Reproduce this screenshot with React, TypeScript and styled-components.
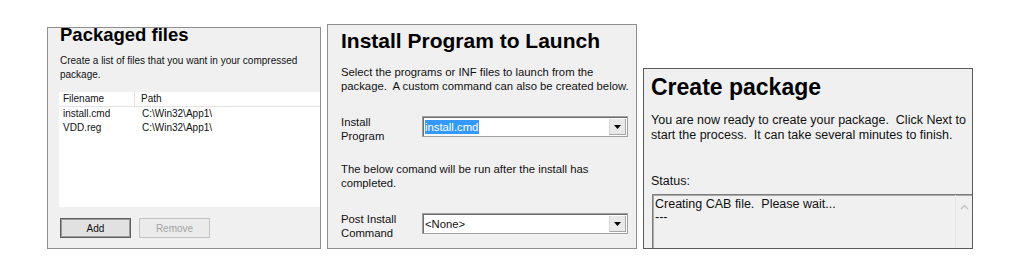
import React from "react";
import styled, { createGlobalStyle } from "styled-components";

const Global = createGlobalStyle`
  html, body { margin: 0; padding: 0; background: #ffffff; }
  body { font-family: "Liberation Sans", Arial, sans-serif; color: #000; }
  #root { width: 1024px; height: 266px; overflow: hidden; }
`;

const Stage = styled.main`
  display: flex;
  align-items: flex-end;
  gap: 6px;
  height: 266px;
  box-sizing: border-box;
  padding: 0 0 17px 47px;
  background: #ffffff;
`;

const Panel = styled.section<{ $width: number; $height: number; $pad: number; $dark?: boolean }>`
  flex: 0 0 auto;
  width: ${(p) => p.$width}px;
  height: ${(p) => p.$height}px;
  box-sizing: border-box;
  border: 1px solid ${(p) => (p.$dark ? "#5a5a5a" : "#8f8f8f")};
  background: #f0f0f0;
  overflow: hidden;
  padding-left: ${(p) => p.$pad}px;
  display: flex;
  flex-direction: column;
  align-items: flex-start;
`;

const Heading = styled.h1<{ $size: number; $lh: number; $top: number }>`
  margin: ${(p) => p.$top}px 0 0;
  font-size: ${(p) => p.$size}px;
  line-height: ${(p) => p.$lh}px;
  font-weight: 700;
  white-space: nowrap;
  color: #000;
`;

const Text = styled.p<{ $size: number; $lh: number; $top: number }>`
  margin: ${(p) => p.$top}px 0 0;
  font-size: ${(p) => p.$size}px;
  line-height: ${(p) => p.$lh}px;
  white-space: nowrap;
  color: #111;
`;

/* ---------- list view (panel 1) ---------- */
const ListView = styled.div`
  flex: 0 0 auto;
  margin: 10px 0 0 -1px;
  width: 280px;
  height: 115px;
  background: #ffffff;
  font-size: 10px;
  color: #111;
`;

const ListHeader = styled.div`
  display: grid;
  grid-template-columns: 76px 1fr;
  height: 14px;
  border-bottom: 1px solid #e3e3e3;
`;

const HeaderCell = styled.div<{ $first?: boolean; $pl: number }>`
  line-height: 14px;
  padding-left: ${(p) => p.$pl}px;
  border-right: ${(p) => (p.$first ? "1px solid #e3e3e3" : "none")};
  white-space: nowrap;
`;

const ListRow = styled.div`
  display: grid;
  grid-template-columns: 76px 1fr;
  height: 14px;
  line-height: 14px;
  white-space: nowrap;
`;

const Cell = styled.div<{ $pl: number }>`
  padding-left: ${(p) => p.$pl}px;
`;

const ButtonRow = styled.div`
  display: flex;
  gap: 8px;
  margin-top: 11px;
`;

const Button = styled.button<{ $default?: boolean }>`
  width: 71px;
  height: 20px;
  box-sizing: border-box;
  padding: 0;
  font-family: "Liberation Sans", Arial, sans-serif;
  font-size: 10px;
  color: ${(p) => (p.$default ? "#111" : "#a3a3a3")};
  background: ${(p) => (p.$default ? "#e1e1e1" : "#ebebeb")};
  border: 1px solid ${(p) => (p.$default ? "#5f5f5f" : "#c4c4c4")};
  box-shadow: ${(p) => (p.$default ? "inset 0 0 0 1px #9a9a9a" : "none")};
`;

/* ---------- combo boxes (panel 2) ---------- */
const FieldRow = styled.div<{ $top: number }>`
  display: flex;
  align-items: flex-start;
  margin-top: ${(p) => p.$top}px;
`;

const FieldLabel = styled.label`
  width: 81px;
  font-size: 11.3px;
  line-height: 14px;
  color: #111;
  white-space: nowrap;
`;

const Combo = styled.div<{ $h: number }>`
  margin-top: 1px;
  width: 206px;
  height: ${(p) => p.$h}px;
  box-sizing: border-box;
  display: flex;
  align-items: center;
  background: #ffffff;
  border: 1px solid #a0a0a0;
  box-shadow: inset 1px 1px 0 #6d6d6d;
  padding: 0 1px 0 2px;
  font-size: 11.3px;
  color: #111;
`;

const ComboValue = styled.span<{ $selected?: boolean }>`
  flex: 1;
  display: flex;
  white-space: nowrap;
  span {
    line-height: 14px;
    padding: 0 1px 0 0;
    background: ${(p) => (p.$selected ? "#3399ff" : "transparent")};
    color: ${(p) => (p.$selected ? "#ffffff" : "#111")};
  }
`;

const DropButton = styled.div`
  width: 17px;
  height: calc(100% - 3px);
  margin-top: 1px;
  box-sizing: border-box;
  display: flex;
  align-items: center;
  justify-content: center;
  background: #e9e9e9;
  border-left: 1px solid #d6d6d6;
  border-bottom: 1px solid #a8a8a8;
  border-right: 1px solid #a8a8a8;
`;

/* ---------- status box (panel 3) ---------- */
const StatusBox = styled.div`
  flex: 0 0 auto;
  margin: 5px 0 0 1px;
  width: 321px;
  height: 70px;
  box-sizing: border-box;
  display: flex;
  border: 1px solid #7d7d7d;
  box-shadow: inset 1px 1px 0 #a9a9a9;
  background: #f0f0f0;
`;

const StatusText = styled.div`
  width: 302px;
  padding: 3px 0 0 2px;
  box-sizing: border-box;
  font-size: 12.5px;
  line-height: 13px;
  color: #111;
  white-space: nowrap;
`;

const ScrollBar = styled.div`
  width: 17px;
  border-left: 1px solid #e6e6e6;
  display: flex;
  justify-content: center;
  padding-top: 9px;
  box-sizing: border-box;
`;

const DownArrow = () => (
  <svg width="7" height="4" viewBox="0 0 7 4">
    <path d="M0 0h7L3.5 4z" fill="#000" />
  </svg>
);

const UpChevron = () => (
  <svg width="9" height="6" viewBox="0 0 9 6">
    <polyline points="1,5 4.5,1.5 8,5" fill="none" stroke="#c4c4c4" strokeWidth="1.4" />
  </svg>
);

export default function App() {
  return (
    <>
      <Global />
      <Stage>
        <Panel $width={274} $height={222} $pad={12}>
          <Heading $size={18.5} $lh={14} $top={0}>Packaged files</Heading>
          <Text $size={10} $lh={14} $top={12}>
            Create a list of files that you want in your compressed
            <br />
            package.
          </Text>
          <ListView>
            <ListHeader>
              <HeaderCell $first $pl={4}>Filename</HeaderCell>
              <HeaderCell $pl={6}>Path</HeaderCell>
            </ListHeader>
            <ListRow>
              <Cell $pl={4}>install.cmd</Cell>
              <Cell $pl={7}>C:\Win32\App1\</Cell>
            </ListRow>
            <ListRow>
              <Cell $pl={4}>VDD.reg</Cell>
              <Cell $pl={7}>C:\Win32\App1\</Cell>
            </ListRow>
          </ListView>
          <ButtonRow>
            <Button $default>Add</Button>
            <Button disabled>Remove</Button>
          </ButtonRow>
        </Panel>

        <Panel $width={310} $height={225} $pad={13}>
          <Heading $size={21} $lh={24} $top={4}>Install Program to Launch</Heading>
          <Text $size={11.3} $lh={14} $top={12}>
            Select the programs or INF files to launch from the
            <br />
            package.&nbsp; A custom command can also be created below.
          </Text>
          <FieldRow $top={22}>
            <FieldLabel>
              Install
              <br />
              Program
            </FieldLabel>
            <Combo $h={21}>
              <ComboValue $selected>
                <span>install.cmd</span>
              </ComboValue>
              <DropButton>
                <DownArrow />
              </DropButton>
            </Combo>
          </FieldRow>
          <Text $size={11.3} $lh={14} $top={19}>
            The below comand will be run after the install has
            <br />
            completed.
          </Text>
          <FieldRow $top={22}>
            <FieldLabel>
              Post Install
              <br />
              Command
            </FieldLabel>
            <Combo $h={21}>
              <ComboValue>
                <span>&lt;None&gt;</span>
              </ComboValue>
              <DropButton>
                <DownArrow />
              </DropButton>
            </Combo>
          </FieldRow>
        </Panel>

        <Panel $width={330} $height={181} $pad={7} $dark>
          <Heading $size={23} $lh={25} $top={6}>Create package</Heading>
          <Text $size={12.5} $lh={15} $top={13}>
            You are now ready to create your package.&nbsp; Click Next to
            <br />
            start the process.&nbsp; It can take several minutes to finish.
          </Text>
          <Text $size={12.5} $lh={15} $top={31}>Status:</Text>
          <StatusBox>
            <StatusText>
              Creating CAB file.&nbsp; Please wait...
              <br />
              ---
            </StatusText>
            <ScrollBar>
              <UpChevron />
            </ScrollBar>
          </StatusBox>
        </Panel>
      </Stage>
    </>
  );
}
